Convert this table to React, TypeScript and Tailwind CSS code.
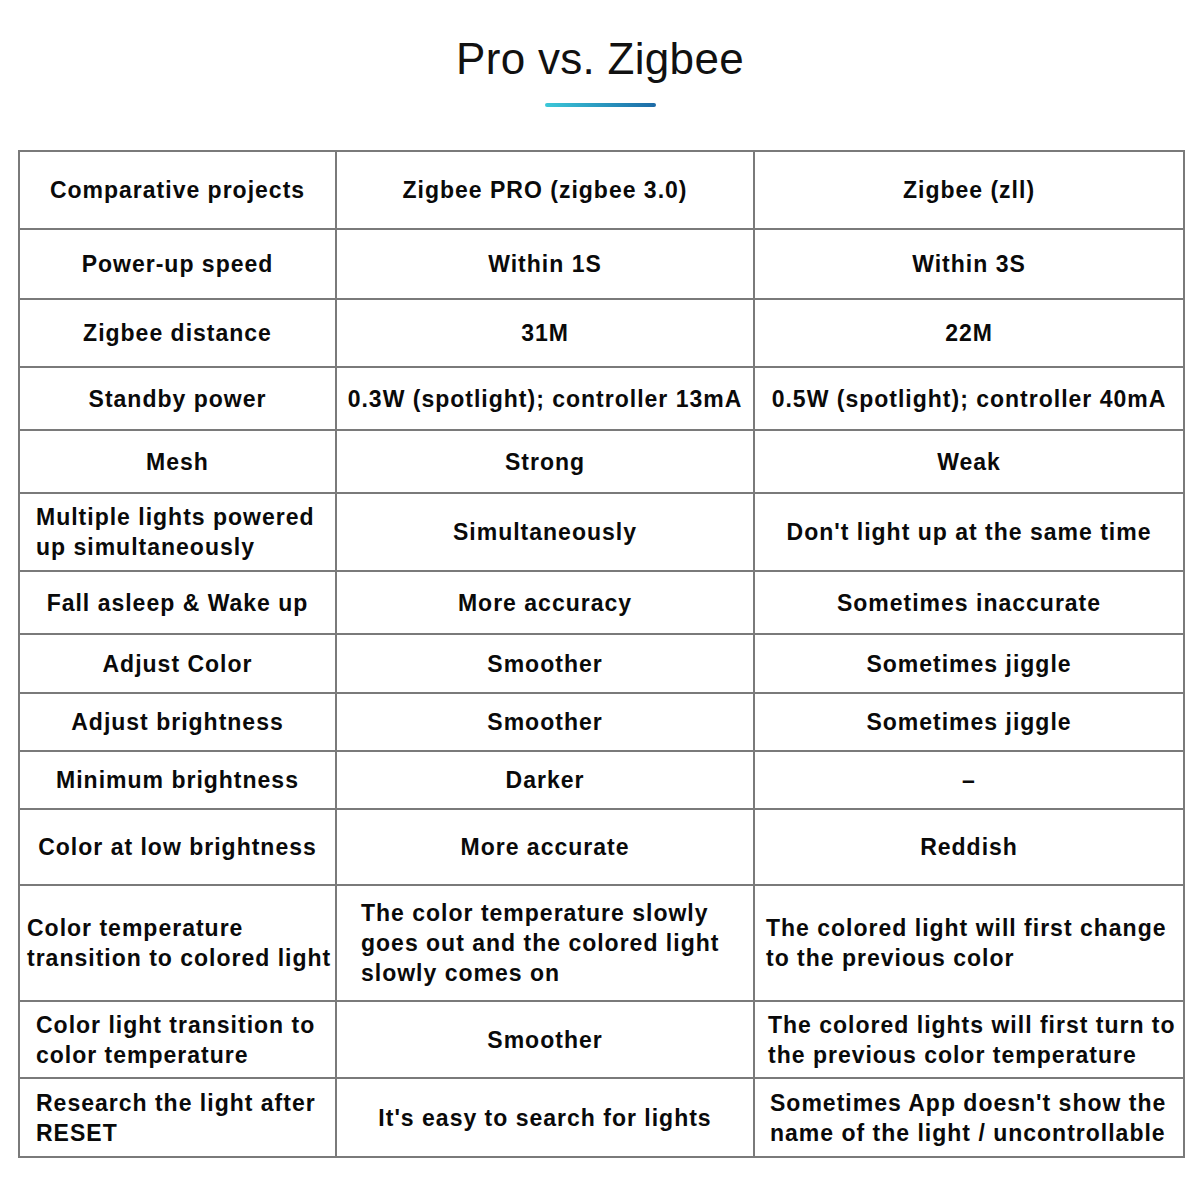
type Cell = { text: string[]; align?: "left"; pl?: number };
type Row = { h: number; cells: Cell[] };

const c = (...lines: string[]): Cell => ({ text: lines });
const l = (pl: number, ...lines: string[]): Cell => ({ text: lines, align: "left", pl });

const rows: Row[] = [
  { h: 78, cells: [c("Comparative projects"), c("Zigbee PRO (zigbee 3.0)"), c("Zigbee (zll)")] },
  { h: 70, cells: [c("Power-up speed"), c("Within 1S"), c("Within 3S")] },
  { h: 68, cells: [c("Zigbee distance"), c("31M"), c("22M")] },
  { h: 63, cells: [c("Standby power"), c("0.3W (spotlight); controller 13mA"), c("0.5W (spotlight); controller 40mA")] },
  { h: 63, cells: [c("Mesh"), c("Strong"), c("Weak")] },
  { h: 78, cells: [l(16, "Multiple lights powered", "up simultaneously"), c("Simultaneously"), c("Don't light up at the same time")] },
  { h: 63, cells: [c("Fall asleep & Wake up"), c("More accuracy"), c("Sometimes inaccurate")] },
  { h: 59, cells: [c("Adjust Color"), c("Smoother"), c("Sometimes jiggle")] },
  { h: 58, cells: [c("Adjust brightness"), c("Smoother"), c("Sometimes jiggle")] },
  { h: 58, cells: [c("Minimum brightness"), c("Darker"), c("–")] },
  { h: 76, cells: [c("Color at low brightness"), c("More accurate"), c("Reddish")] },
  {
    h: 116,
    cells: [
      l(7, "Color temperature", "transition to colored light"),
      l(24, "The color temperature slowly", "goes out and the colored light", "slowly comes on"),
      l(11, "The colored light will first change", "to the previous color"),
    ],
  },
  {
    h: 77,
    cells: [
      l(16, "Color light transition to", "color temperature"),
      c("Smoother"),
      l(13, "The colored lights will first turn to", "the previous color temperature"),
    ],
  },
  {
    h: 79,
    cells: [
      l(16, "Research the light after", "RESET"),
      c("It's easy to search for lights"),
      l(15, "Sometimes App doesn't show the", "name of the light / uncontrollable"),
    ],
  },
];

export default function App() {
  return (
    <div className="w-[1200px] h-[1200px] bg-white font-['Liberation_Sans',Arial,sans-serif] text-black">
      <div className="flex flex-col items-center pt-[37px]">
        <h1 className="text-[44px] leading-[44px] font-normal tracking-[0.3px] text-[#111]">Pro vs. Zigbee</h1>
        <div className="mt-[22px] h-[4px] w-[111px] rounded-full bg-gradient-to-r from-[#3cc8d8] to-[#1d6aa6]" />
      </div>
      <div className="pl-[18px] pt-[43px]">
        <table className="border-collapse border-2 border-[#6f6f6f]">
          <colgroup>
            <col className="w-[317px]" />
            <col className="w-[418px]" />
            <col className="w-[430px]" />
          </colgroup>
          <tbody>
            {rows.map((r, i) => (
              <tr key={i}>
                {r.cells.map((cell, j) => (
                  <td
                    key={j}
                    style={{ height: r.h, paddingLeft: cell.pl }}
                    className={`border-2 border-[#7a7a7a] p-0 align-middle text-[23px] font-bold leading-[30px] tracking-[1px] text-[#0a0a0a] ${
                      cell.align === "left" ? "text-left" : "text-center"
                    }`}
                  >
                    {cell.text.map((t, k) => (
                      <div key={k} className="whitespace-nowrap">
                        {t}
                      </div>
                    ))}
                  </td>
                ))}
              </tr>
            ))}
          </tbody>
        </table>
      </div>
    </div>
  );
}
